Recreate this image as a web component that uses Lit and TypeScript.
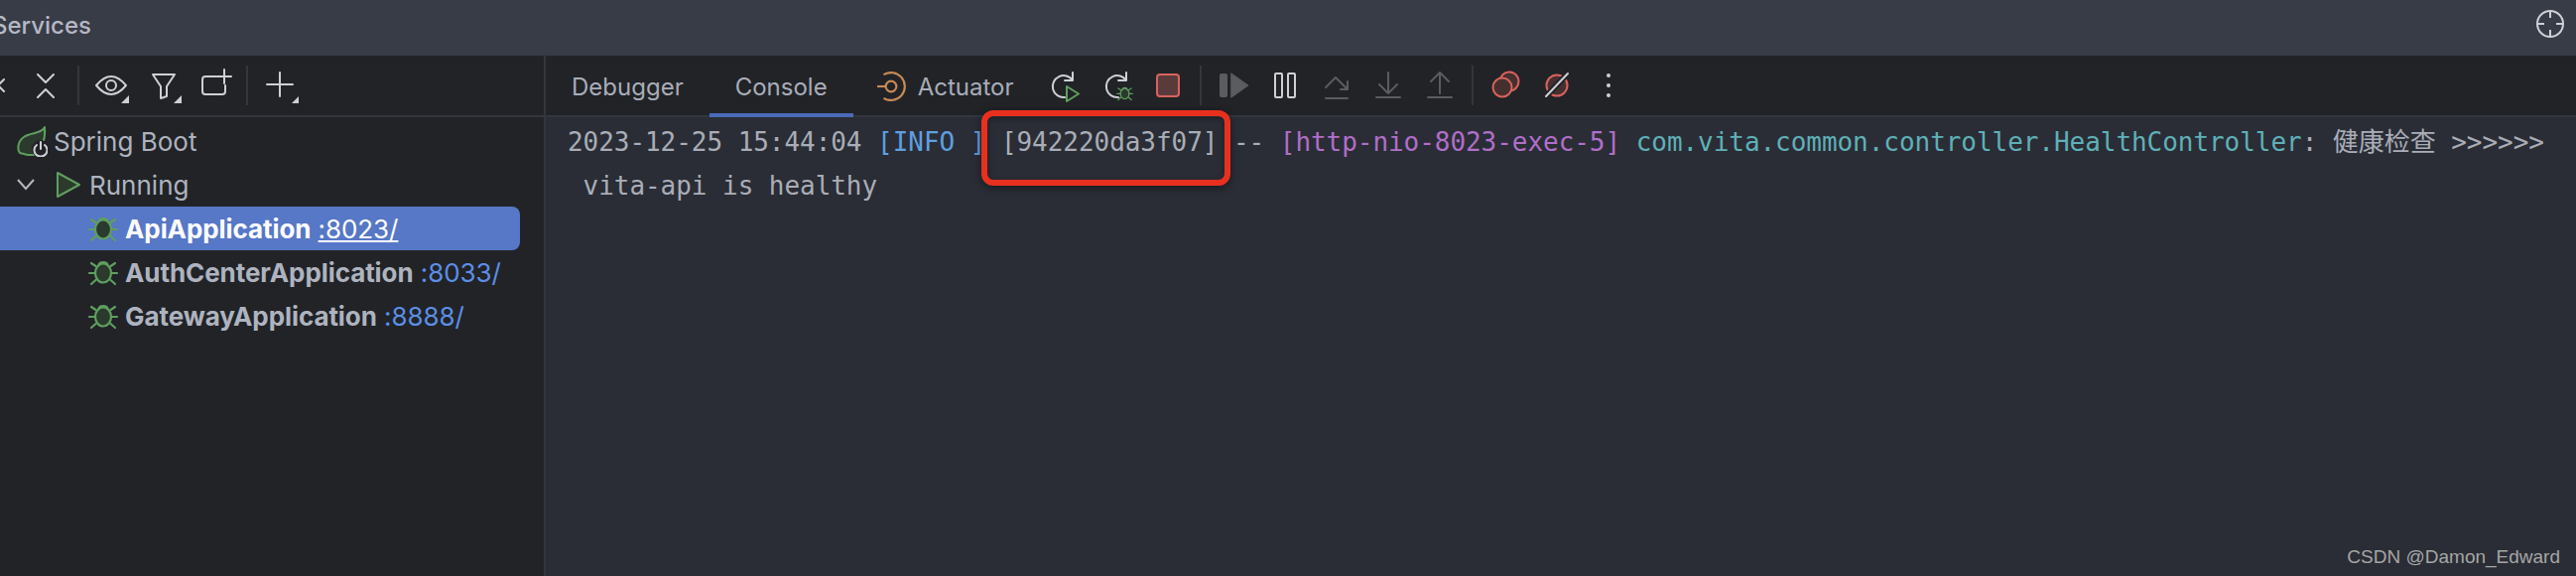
import { LitElement, html, css, svg } from "lit";
import { customElement } from "lit/decorators.js";

const G = "#5f9e5f";
const GF = "#2b3a2d";
const R = "#d9635c";
const L = "#ced0d6";
const D = "#5a5c60";

const ic = (body: unknown, size = 40) =>
  html`<svg class="ic" width=${size} height=${size} viewBox="0 0 40 40" fill="none" stroke-linecap="round" stroke-linejoin="round">${body}</svg>`;

const tri = (x: number) => svg`<path d="M${x + 8} 30V38H${x}Z" fill=${L}/>`;

const arc = svg`<path d="M20 32A11 11 0 1 1 28 15M28 7V15H20" stroke=${L} stroke-width="2"/>`;

const bug = (fill: string) => svg`
  <ellipse cx="16" cy="17" rx="8" ry="9.5" fill=${fill} stroke=${G} stroke-width="2.2"/>
  <path d="M11.5 9C12 5 20 5 20.5 9M8.5 10L4 7M23.5 10L28 7M8 17H2M24 17H30M8.5 24L4 28M23.5 24L28 28" stroke=${G} stroke-width="2.2"/>`;

const treeIcon = (body: unknown) =>
  html`<svg class="ti" width="32" height="32" viewBox="0 0 32 32" fill="none" stroke-linecap="round" stroke-linejoin="round">${body}</svg>`;

@customElement("app-root")
export class AppRoot extends LitElement {
  static styles = css`
    :host { display: block; width: 2596px; height: 580px; position: relative; overflow: hidden; background: #2a2d35; font-family: Inter, "Noto Sans", sans-serif; }
    .title { height: 56px; background: #383c47; display: flex; align-items: center; justify-content: space-between; padding-right: 10px; box-sizing: border-box; }
    .title span { margin-left: -8px; margin-bottom: 5px; font-size: 24px; font-weight: 500; color: #b4b8c3; }
    .title svg { margin-bottom: 8px; }
    .main { display: flex; height: 524px; }
    .left { width: 548px; background: #212327; border-right: 2px solid #34363d; flex: none; box-sizing: content-box; }
    .right { flex: 1; min-width: 0; display: flex; flex-direction: column; }
    .bar { height: 60px; display: flex; align-items: center; border-bottom: 2px solid #34363d; flex: none; }
    .right .bar { background: #212327; }
    .left .bar { margin-left: -32px; }
    .slot { width: 52px; height: 40px; display: flex; justify-content: center; align-items: center; flex: none; }
    .ic { display: block; overflow: visible; }
    .sep { width: 2px; height: 40px; background: #34363d; margin: 0 6px; flex: none; }
    .tree { padding-top: 2px; }
    .row { height: 44px; display: flex; align-items: center; font-size: 26px; color: #aeb3bf; margin-right: 24px; white-space: pre; }
    .row.sel { background: #5777c7; border-radius: 0 8px 8px 0; color: #fff; }
    .row.sel .port { color: #fff; text-decoration: underline; }
    .top { padding-left: 16px; gap: 6px; }
    .run { padding-left: 16px; }
    .run .chev { margin-right: 18px; }
    .run .ti { margin-right: 4px; }
    .app { padding-left: 88px; gap: 6px; letter-spacing: -0.08px; }
    .app b { font-weight: 700; }
    .port { color: #5c8fe6; }
    .tabs { display: flex; align-items: stretch; height: 60px; align-self: flex-start; font-size: 24px; color: #a9adb8; }
    .tab { display: flex; align-items: center; padding: 0 26px; gap: 12px; margin-bottom: -2px; }
    .tab.act { padding-left: 23px; }
    .tab.on { border-bottom: 4px solid #4a6ab8; box-sizing: border-box; height: 62px; padding-top: 4px; }
    .console { flex: 1; padding: 3px 0 0 22px; font-family: "DejaVu Sans Mono", "Noto Sans CJK SC", monospace; font-size: 26px; letter-spacing: -0.05px; line-height: 44px; color: #a9adb8; white-space: pre; }
    .info { color: #5f9fe0; }
    .thread { color: #b06fc9; }
    .cls { color: #5fb0b8; }
    .box { position: absolute; left: 989px; top: 111px; width: 251px; height: 76px; box-sizing: border-box; border: 6px solid #e8301f; border-radius: 12px; box-shadow: 0 2px 8px rgba(0,0,0,.45), inset 0 2px 6px rgba(0,0,0,.35); }
    .mark { position: absolute; right: 16px; top: 550px; font-family: "Liberation Sans", sans-serif; font-size: 19px; color: #a6a6a6; }
  `;

  render() {
    return html`
      <div class="title">
        <span>Services</span>
        <svg width="32" height="32" viewBox="0 0 32 32" fill="none" stroke=${L} stroke-width="2"><circle cx="16" cy="16" r="13"/><path d="M16 3V10M16 22V29M3 16H10M22 16H29"/></svg>
      </div>
      <div class="main">
        <div class="left">
          <div class="bar">
            <div class="slot">${ic(svg`<path d="M30 14L24 20L30 26" stroke=${L} stroke-width="2"/>`)}</div>
            <div class="slot">${ic(svg`<path d="M12 9L20 17L28 9M12 32L20 24L28 32" stroke=${L} stroke-width="2"/>`)}</div>
            <div class="sep"></div>
            <div class="slot">${ic(svg`<path d="M5 20Q20 2 35 20Q20 38 5 20Z" stroke=${L} stroke-width="2"/><circle cx="20" cy="20" r="5" stroke=${L} stroke-width="2"/>${tri(30)}`)}</div>
            <div class="slot">${ic(svg`<path d="M10 9H32L24 21V31L18 33V21Z" stroke=${L} stroke-width="2"/><path d="M39 30V38H31Z" fill=${L}/>`)}</div>
            <div class="slot">${ic(svg`<path d="M22 11H11A3 3 0 0 0 8 14V26A3 3 0 0 0 11 29H28A3 3 0 0 0 31 26V20M30 4V18M23 11H37" stroke=${L} stroke-width="2"/>`)}</div>
            <div class="sep"></div>
            <div class="slot">${ic(svg`<path d="M20 7V31M7 19H33" stroke=${L} stroke-width="2"/><path d="M39 31V38H32Z" fill=${L}/>`)}</div>
          </div>
          <div class="tree">
            <div class="row top">
              ${treeIcon(svg`<path d="M29 2C26 9 15 7 8 12C2 16 1 24 4 28L12 30H20C26 26 30 14 29 2Z" fill=${GF} stroke=${G} stroke-width="2"/><circle cx="25" cy="24" r="9" fill="#212327"/><path d="M21 20A6.5 6.5 0 1 0 29 20M25 17V24" stroke=${L} stroke-width="2"/>`)}
              <span>Spring Boot</span>
            </div>
            <div class="row run">
              <svg class="chev" width="20" height="14" viewBox="0 0 20 14" fill="none" stroke="#b4b8bf" stroke-width="2"><path d="M2 2L10 11L18 2"/></svg>
              ${treeIcon(svg`<path d="M4 4L26 16L4 28Z" fill=${GF} stroke=${G} stroke-width="2"/>`)}
              <span>Running</span>
            </div>
            <div class="row app sel">${treeIcon(bug("#2a3a30"))}<span><b>ApiApplication</b> <span class="port">:8023/</span></span></div>
            <div class="row app">${treeIcon(bug(GF))}<span><b>AuthCenterApplication</b> <span class="port">:8033/</span></span></div>
            <div class="row app">${treeIcon(bug(GF))}<span><b>GatewayApplication</b> <span class="port">:8888/</span></span></div>
          </div>
        </div>
        <div class="right">
          <div class="bar">
            <div class="tabs">
              <div class="tab">Debugger</div>
              <div class="tab on">Console</div>
              <div class="tab act">
                <svg width="30" height="30" viewBox="0 0 28 28" fill="none" stroke="#c98a55" stroke-width="2"><path d="M1 14H9"/><circle cx="14" cy="14" r="5"/><path d="M7 3A13 13 0 1 1 7 25"/></svg>
                Actuator
              </div>
            </div>
            <div class="slot">${ic(svg`${arc}<path d="M22 21L34 28.5L22 36Z" fill="#212327" stroke=${G} stroke-width="2"/>`)}</div>
            <div class="slot">${ic(svg`<g transform="translate(2 0)">${arc}</g><g transform="translate(19.7 19.1) scale(.55)">${bug(GF)}</g>`)}</div>
            <div class="slot">${ic(svg`<rect x="9" y="9" width="22" height="22" rx="3" fill="#5a3b3b" stroke=${R} stroke-width="2"/>`)}</div>
            <div class="sep"></div>
            <div class="slot">${ic(svg`<rect x="6" y="8" width="8" height="24" rx="2" fill=${D}/><path d="M18 8L35 20L18 32Z" fill=${D} stroke=${D}/>`)}</div>
            <div class="slot">${ic(svg`<rect x="10" y="8" width="7" height="24" rx="1" stroke=${L} stroke-width="2"/><rect x="23" y="8" width="7" height="24" rx="1" stroke=${L} stroke-width="2"/>`)}</div>
            <div class="slot">${ic(svg`<path d="M9 22L19 12L31 24M31 16V24H24M9 33H31" stroke=${D} stroke-width="2"/>`)}</div>
            <div class="slot">${ic(svg`<path d="M20 7V28M11 19L20 28L29 19M8 32H32" stroke=${D} stroke-width="2"/>`)}</div>
            <div class="slot">${ic(svg`<path d="M20 7V28M11 16L20 7L29 16M8 32H32" stroke=${D} stroke-width="2"/>`)}</div>
            <div class="sep"></div>
            <div class="slot">${ic(svg`<circle cx="24" cy="16" r="9.5" fill="#46302f" stroke=${R} stroke-width="2"/><circle cx="17" cy="22" r="9.5" fill="#46302f" stroke=${R} stroke-width="2"/>`)}</div>
            <div class="slot">${ic(svg`<circle cx="20" cy="20" r="10.5" fill="#46302f" stroke=${R} stroke-width="2"/><path d="M9 31L31 8" stroke="#212327" stroke-width="6"/><path d="M9 31L31 8" stroke=${L} stroke-width="2"/>`)}</div>
            <div class="slot">${ic(svg`<circle cx="20" cy="10" r="2" fill=${L}/><circle cx="20" cy="20" r="2" fill=${L}/><circle cx="20" cy="30" r="2" fill=${L}/>`)}</div>
          </div>
          <div class="console">2023-12-25 15:44:04 <span class="info">[INFO ]</span> [942220da3f07] -- <span class="thread">[http-nio-8023-exec-5]</span> <span class="cls">com.vita.common.controller.HealthController</span>: 健康检查 &gt;&gt;&gt;&gt;&gt;&gt;
 vita-api is healthy</div>
        </div>
      </div>
      <div class="box"></div>
      <div class="mark">CSDN @Damon_Edward</div>
    `;
  }
}
